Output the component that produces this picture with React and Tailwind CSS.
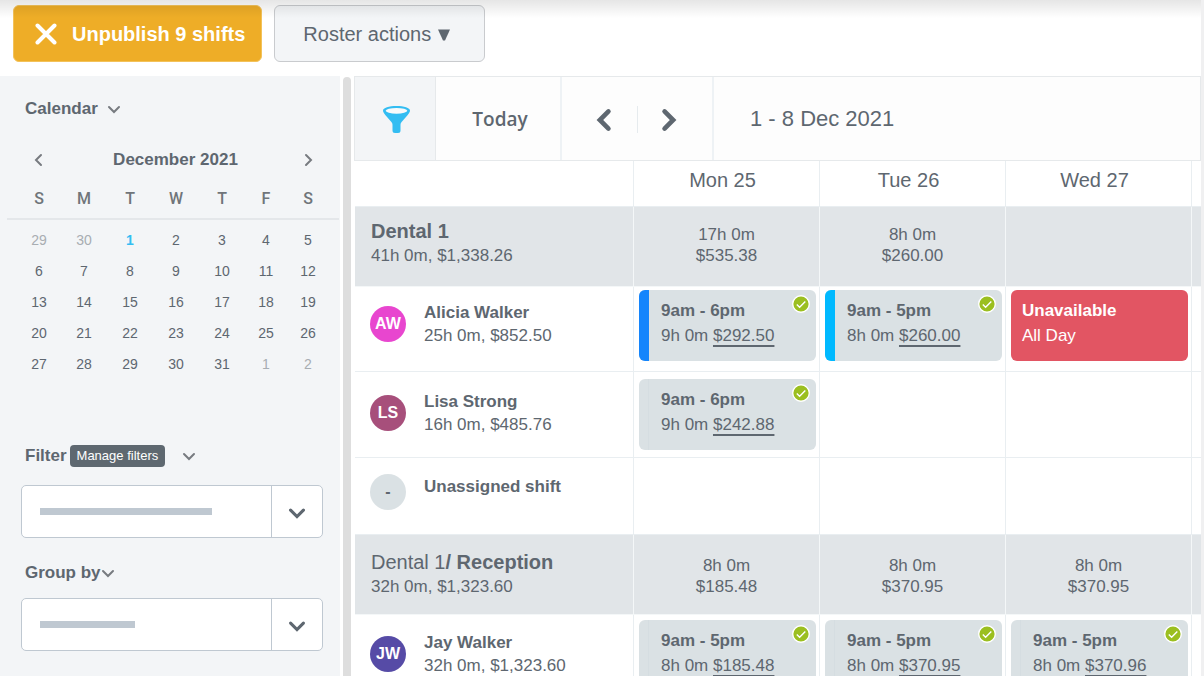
const weekdays = ['S', 'M', 'T', 'W', 'T', 'F', 'S'];

const weeks = [
  [29, 30, 1, 2, 3, 4, 5],
  [6, 7, 8, 9, 10, 11, 12],
  [13, 14, 15, 16, 17, 18, 19],
  [20, 21, 22, 23, 24, 25, 26],
  [27, 28, 29, 30, 31, 1, 2],
];

const days = ['Mon 25', 'Tue 26', 'Wed 27'];

const rows = [
  {
    type: 'group',
    pad: 'pt-3',
    title: <strong>Dental 1</strong>,
    total: '41h 0m, $1,338.26',
    cells: [['17h 0m', '$535.38'], ['8h 0m', '$260.00'], null],
  },
  {
    type: 'person',
    height: 'h-[85px]',
    pad: 'pt-[3px]',
    initials: 'AW',
    color: 'bg-[#e846cf]',
    name: 'Alicia Walker',
    total: '25h 0m, $852.50',
    cells: [
      { time: '9am - 6pm', hours: '9h 0m', cost: '$292.50', bar: 'bg-[#1485fc]' },
      { time: '9am - 5pm', hours: '8h 0m', cost: '$260.00', bar: 'bg-[#00b9ff]' },
      { unavailable: true },
    ],
  },
  {
    type: 'person',
    height: 'h-[86px]',
    pad: 'pt-[7px]',
    initials: 'LS',
    color: 'bg-[#a74f7b]',
    name: 'Lisa Strong',
    total: '16h 0m, $485.76',
    cells: [{ time: '9am - 6pm', hours: '9h 0m', cost: '$242.88' }, null, null],
  },
  {
    type: 'person',
    height: 'h-[77px]',
    pad: 'pt-0',
    initials: '-',
    name: 'Unassigned shift',
    cells: [null, null, null],
  },
  {
    type: 'group',
    pad: 'pt-[15px]',
    title: (
      <>
        Dental 1<strong>/ Reception</strong>
      </>
    ),
    total: '32h 0m, $1,323.60',
    cells: [['8h 0m', '$185.48'], ['8h 0m', '$370.95'], ['8h 0m', '$370.95']],
  },
  {
    type: 'person',
    height: 'h-[85px]',
    pad: 'pt-[5px]',
    initials: 'JW',
    color: 'bg-[#564ba6]',
    name: 'Jay Walker',
    total: '32h 0m, $1,323.60',
    cells: [
      { time: '9am - 5pm', hours: '8h 0m', cost: '$185.48' },
      { time: '9am - 5pm', hours: '8h 0m', cost: '$370.95' },
      { time: '9am - 5pm', hours: '8h 0m', cost: '$370.96' },
    ],
  },
];

const chevrons = {
  down: 'M2 4 L7 9 L12 4',
  left: 'M9 2 L4 7 L9 12',
  right: 'M5 2 L10 7 L5 12',
};

function Chevron({ dir, className, stroke = 2 }) {
  return (
    <svg viewBox="0 0 14 14" className={className} fill="none" stroke="currentColor" strokeWidth={stroke} strokeLinecap="round" aria-hidden="true">
      <path d={chevrons[dir]} />
    </svg>
  );
}

function Header() {
  return (
    <header className="flex h-[76px] shrink-0 items-start gap-3 px-[13px] pt-[5px]">
      <button className="flex h-[57px] items-center gap-[15px] rounded-md border border-[#f3c25a] bg-[#eead27] pl-[21px] pr-4 text-xl font-bold text-white">
        <svg viewBox="0 0 22 22" className="h-[22px] w-[22px]" stroke="currentColor" strokeWidth="4" strokeLinecap="round" aria-hidden="true">
          <path d="M2.5 2.5 L19.5 19.5 M19.5 2.5 L2.5 19.5" />
        </svg>
        Unpublish 9 shifts
      </button>
      <button className="flex h-[57px] items-center gap-[6px] rounded-md border border-[#c9cbce] bg-[#f3f5f7] pl-7 pr-[33px] text-xl">
        Roster actions
        <svg viewBox="0 0 14 12" className="mt-[2px] h-3 w-[14px] shrink-0" fill="currentColor" aria-hidden="true">
          <path d="M1 0.5 H13 L8 11.5 H6 Z" />
        </svg>
      </button>
    </header>
  );
}

function dayColor(week, day) {
  if ((week === 0 && day > 20) || (week === 4 && day < 10)) return 'text-[#a8adb2]';
  if (week === 0 && day === 1) return 'font-bold text-[#33bdf2]';
  return '';
}

function Calendar() {
  return (
    <section>
      <h2 className="flex h-6 items-center gap-[9px] pl-[25px] text-[17px] font-bold">
        Calendar
        <Chevron dir="down" className="mt-[2px] h-[14px] w-[14px] text-[#777b80]" />
      </h2>
      <div className="mt-[27px] flex h-6 items-center justify-between pl-8 pr-[25px]">
        <button aria-label="Previous month">
          <Chevron dir="left" className="h-[14px] w-[14px] text-[#777b80]" />
        </button>
        <h3 className="pl-1 text-[17px] font-bold">December 2021</h3>
        <button aria-label="Next month">
          <Chevron dir="right" className="h-[14px] w-[14px] text-[#777b80]" />
        </button>
      </div>
      <table className="ml-[7px] mt-[7px] w-[332px] table-fixed border-collapse text-center">
        <colgroup>
          <col className="w-[54px]" />
          <col className="w-[46px]" />
          <col className="w-[46px]" />
          <col className="w-[46px]" />
          <col className="w-[46px]" />
          <col className="w-[42px]" />
          <col className="w-[52px]" />
        </colgroup>
        <thead className="border-b-2 border-[#e4e7ea]">
          <tr>
            {weekdays.map((d, i) => (
              <th key={i} className="h-10 p-0 font-[Roboto] text-base font-medium text-[#70757a] first:pl-[10px] last:pr-[10px]">
                {d}
              </th>
            ))}
          </tr>
        </thead>
        <tbody className="text-sm before:block before:h-1">
          {weeks.map((week, w) => (
            <tr key={w}>
              {week.map((day, i) => (
                <td key={i} className="h-[31px] p-0 first:pl-[10px] last:pr-[10px]">
                  <span className={dayColor(w, day)}>{day}</span>
                </td>
              ))}
            </tr>
          ))}
        </tbody>
      </table>
    </section>
  );
}

function Dropdown({ id, bar }) {
  return (
    <div className="ml-[21px] mr-[17px] grid h-[53px]">
      <select id={id} className="col-start-1 row-start-1 appearance-none rounded-[5px] border border-[#bfc8d1] bg-white">
        <option value=""></option>
      </select>
      <div className="pointer-events-none col-start-1 row-start-1 flex items-center">
        <div className="flex-1 pl-[19px]">
          <div className={`h-[7px] bg-[#bfc8d1] ${bar}`} />
        </div>
        <div className="flex h-full w-[52px] items-center justify-center border-l border-[#bfc8d1] pr-[2px] pt-1">
          <Chevron dir="down" stroke={2.4} className="h-[18px] w-[18px]" />
        </div>
      </div>
    </div>
  );
}

function Sidebar() {
  return (
    <aside className="w-[340px] shrink-0 bg-[#f3f5f7] pt-[21px]">
      <Calendar />
      <div className="mt-[65px] flex h-6 items-center pl-[25px]">
        <label htmlFor="filter" className="text-[17px] font-bold">Filter</label>
        <button className="ml-[3px] h-[22px] rounded-sm bg-[#5e6870] px-[7px] text-[13px] text-white">Manage filters</button>
        <Chevron dir="down" className="ml-[17px] mt-[2px] h-[14px] w-[14px] text-[#777b80]" />
      </div>
      <div className="mt-[17px]">
        <Dropdown id="filter" bar="w-[172px]" />
      </div>
      <div className="mt-[23px] flex h-6 items-center pl-[25px]">
        <label htmlFor="group" className="text-[17px] font-bold">Group by</label>
        <Chevron dir="down" className="mt-[2px] h-[14px] w-[14px] text-[#777b80]" />
      </div>
      <div className="mt-[13px]">
        <Dropdown id="group" bar="w-[95px]" />
      </div>
    </aside>
  );
}

function Toolbar() {
  return (
    <div className="flex h-[85px] border border-[#e6e9eb] bg-[#fdfdfd]">
      <button aria-label="Filter roster" className="flex w-[81px] items-center justify-center border-r border-[#e6e9eb] bg-[#f3f5f7] pl-[2px] pt-[2px]">
        <svg viewBox="0 0 27 27" className="h-[27px] w-[27px]" aria-hidden="true">
          <path fill="#33bdf2" d="M0 4.6 C0 1.8 6 0 13.5 0 S27 1.8 27 4.6 C27 6.2 25.8 7.6 24.5 9.2 L18.6 16 Q17.5 17.3 17.5 18.8 V24.5 Q17.5 27 15 27 H12 Q9.5 27 9.5 24.5 V18.8 Q9.5 17.3 8.4 16 L2.5 9.2 C1.2 7.6 0 6.2 0 4.6 Z" />
          <ellipse cx="13.5" cy="4.8" rx="10.8" ry="2.9" fill="#f8fafb" />
        </svg>
      </button>
      <button className="w-[126px] border-r-2 border-[#eef2f5] pl-1 pt-[2px] font-['Open_Sans',sans-serif] text-[19px] font-semibold">Today</button>
      <div className="flex w-[152px] items-center justify-center border-r-2 border-[#eef2f5] pt-[2px]">
        <button aria-label="Previous week" className="pl-[22px] pr-5">
          <Chevron dir="left" stroke={2.7} className="h-6 w-6" />
        </button>
        <div className="h-[27px] w-px bg-[#e6ebee]" />
        <button aria-label="Next week" className="pl-[18px] pr-6">
          <Chevron dir="right" stroke={2.7} className="h-6 w-6" />
        </button>
      </div>
      <h1 className="flex items-center pl-9 text-[22px]">1 - 8 Dec 2021</h1>
    </div>
  );
}

function Shift({ shift }) {
  if (shift.unavailable) {
    return (
      <div className="h-[71px] rounded-md bg-[#e25563] pl-[11px] pt-2 leading-[25px] text-white">
        <div className="font-bold">Unavailable</div>
        <div>All Day</div>
      </div>
    );
  }

  return (
    <div className="relative flex h-[71px] overflow-hidden rounded-md bg-[#dae1e4]">
      <div className={`w-[10px] shrink-0 ${shift.bar || 'border-r border-[#d5dde1]'}`} />
      <div className="pl-3 pt-2 leading-[25px]">
        <div className="font-bold">{shift.time}</div>
        <div>
          {shift.hours} <a href="#cost" className="underline decoration-2 underline-offset-4">{shift.cost}</a>
        </div>
      </div>
      <svg viewBox="0 0 18 18" className="absolute right-[6px] top-[5px] h-[18px] w-[18px]" aria-hidden="true">
        <circle cx="9" cy="9" r="8.3" fill="#9bbf20" stroke="#fff" strokeWidth="1.4" />
        <path d="M4.8 9.4 L7.6 12.2 L13.3 6.4" fill="none" stroke="#fff" strokeWidth="1.4" />
      </svg>
    </div>
  );
}

function GroupRow({ row }) {
  return (
    <tr className="h-20 bg-[#e1e5e8]">
      <th scope="row" className={`border-b border-r border-[#f4f7f8] px-4 text-left align-top font-normal ${row.pad}`}>
        <div className="text-xl leading-6">{row.title}</div>
        <div className="leading-[25px]">{row.total}</div>
      </th>
      {row.cells.map((cell, i) => (
        <td key={i} className={`border-b border-r border-[#f4f7f8] text-center align-top leading-[21px] ${row.pad}`}>
          {cell && (
            <div className="pt-[5px]">
              <div>{cell[0]}</div>
              <div>{cell[1]}</div>
            </div>
          )}
        </td>
      ))}
      <td className="border-b border-[#f4f7f8]" />
    </tr>
  );
}

function PersonRow({ row }) {
  return (
    <tr className={row.height}>
      <th scope="row" className={`border-b border-r border-[#e9eef1] pl-[15px] text-left align-top font-normal ${row.pad}`}>
        <div className="flex gap-[18px] pt-4">
          <div className={`flex h-9 w-9 shrink-0 items-center justify-center rounded-full text-base font-bold ${row.color ? `${row.color} text-white` : 'bg-[#dae1e4]'}`}>
            {row.initials}
          </div>
          <div className={row.total ? '-mt-[5px] leading-[23px]' : 'leading-[25px]'}>
            <div className="font-bold">{row.name}</div>
            <div>{row.total}</div>
          </div>
        </div>
      </th>
      {row.cells.map((cell, i) => (
        <td key={i} className={`border-b border-r border-[#e9eef1] pl-[5px] pr-[3px] align-top ${row.pad}`}>
          {cell && <Shift shift={cell} />}
        </td>
      ))}
      <td className="border-b border-[#e9eef1]" />
    </tr>
  );
}

function Roster() {
  return (
    <main className="min-w-0 flex-1">
      <Toolbar />
      <div className="pl-px">
        <table className="w-full table-fixed border-separate border-spacing-0 text-[17px]">
          <colgroup>
            <col className="w-[279px]" />
            <col />
            <col />
            <col />
            <col className="w-[9px]" />
          </colgroup>
          <thead>
            <tr className="h-[46px] text-xl">
              <td className="border-b border-r border-[#e9eef1]" />
              {days.map((day) => (
                <th key={day} scope="col" className="border-b border-r border-[#e9eef1] pb-2 pr-2 font-normal">
                  {day}
                </th>
              ))}
              <td className="border-b border-[#e9eef1]" />
            </tr>
          </thead>
          <tbody>
            {rows.map((row, i) => (row.type === 'group' ? <GroupRow key={i} row={row} /> : <PersonRow key={i} row={row} />))}
          </tbody>
        </table>
      </div>
    </main>
  );
}

export default function App() {
  return (
    <div className="relative flex h-screen flex-col overflow-hidden border-r-[3px] border-[#f0f0f1] bg-white font-['Liberation_Sans',Arial,sans-serif] text-[#5e6770]">
      <Header />
      <div className="flex min-h-0 flex-1">
        <Sidebar />
        <div className="mx-[3px] mt-px w-2 shrink-0 rounded-t-full bg-[#dedede]" />
        <Roster />
      </div>
      <div className="pointer-events-none absolute inset-x-0 top-0 h-[18px] bg-linear-to-b from-black/10 to-transparent" />
    </div>
  );
}
